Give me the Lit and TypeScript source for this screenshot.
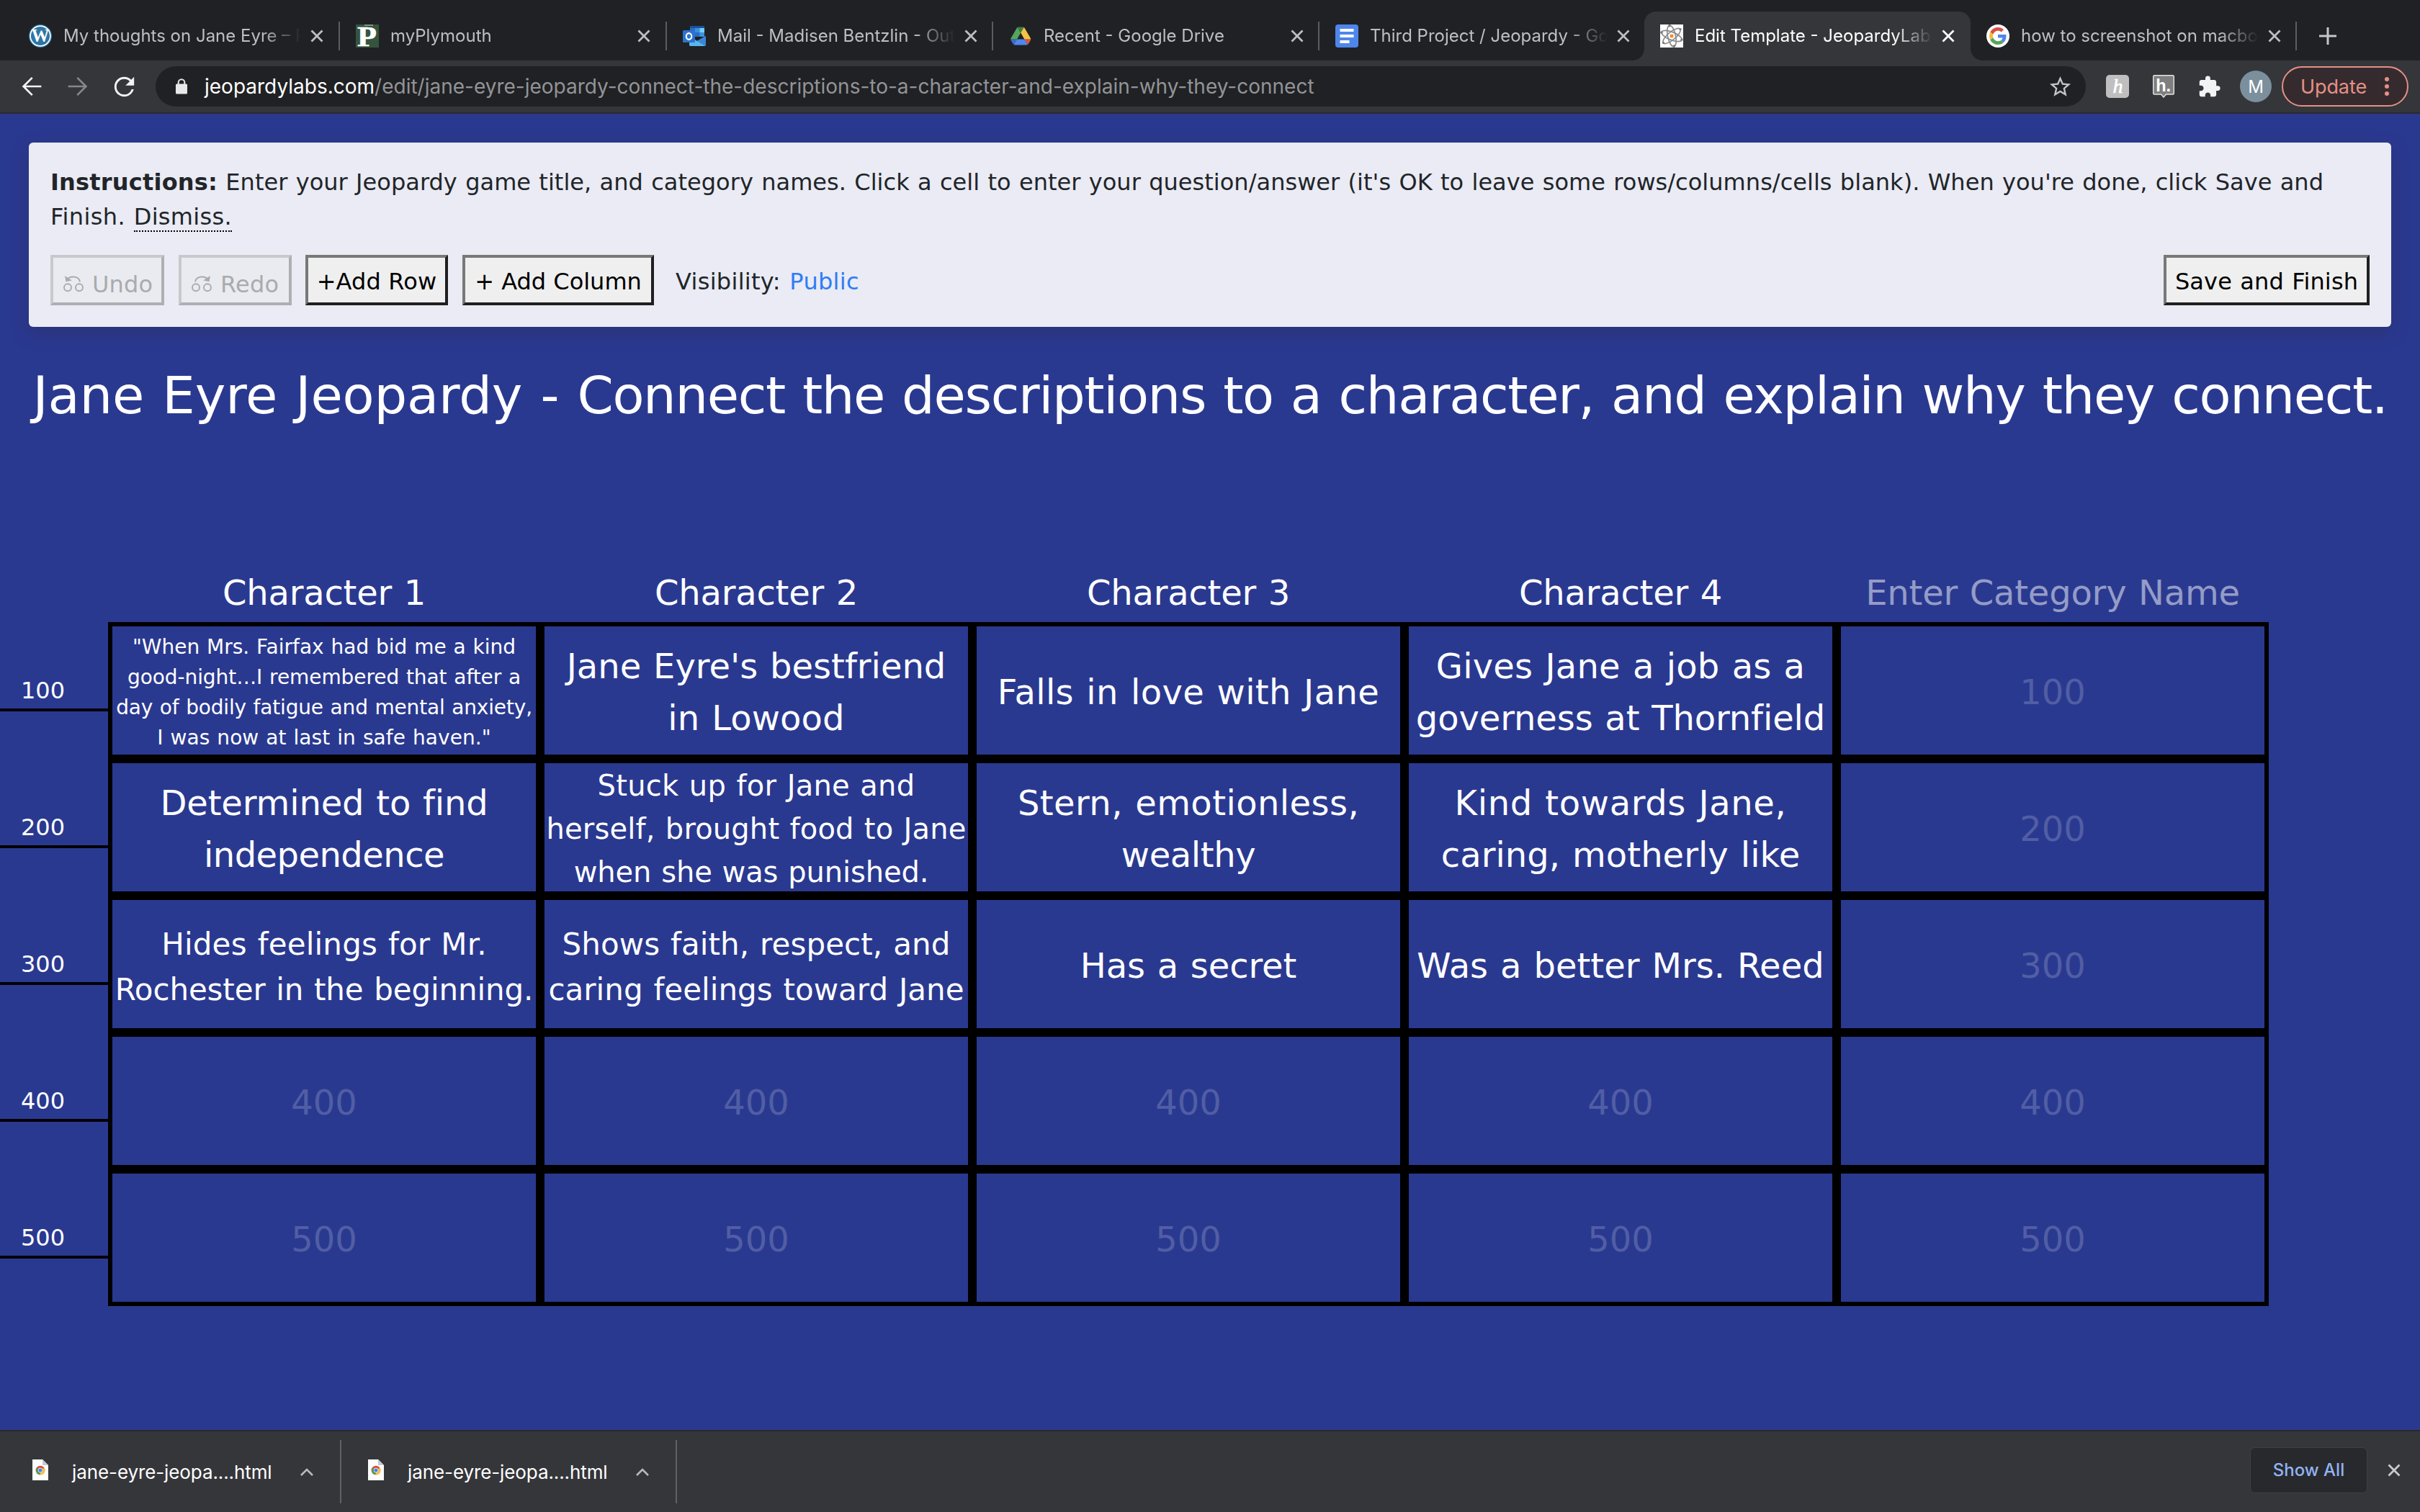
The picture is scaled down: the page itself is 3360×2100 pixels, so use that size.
import { LitElement, html, css, nothing } from "lit";
import { customElement } from "lit/decorators.js";
import { styleMap } from "lit/directives/style-map.js";
import { classMap } from "lit/directives/class-map.js";

/* ---------- icons ---------- */

const wordpress = html`<svg class="fav" viewBox="0 0 32 32"><circle cx="16" cy="16" r="16" fill="#2f75a3"/><circle cx="16" cy="16" r="13.900" fill="none" stroke="#fff" stroke-width="1.700"/><text x="16" y="24.400" text-anchor="middle" font-family="Liberation Serif, serif" font-weight="bold" font-size="25" textLength="25" lengthAdjust="spacingAndGlyphs" fill="#fff">W</text></svg>`;

const plymouth = html`<svg class="fav" viewBox="0 0 32 32"><rect width="32" height="32" fill="#35543f"/><rect x="12" width="12" height="2" fill="#7d9285"/><text x="15.500" y="29.500" text-anchor="middle" font-family="Liberation Serif, serif" font-weight="bold" font-size="41" textLength="27" lengthAdjust="spacingAndGlyphs" stroke="#fff" stroke-width=".6" fill="#fff">P</text></svg>`;

const outlook = html`<svg class="fav" viewBox="0 0 32 32"><path d="M10 2h20v15H10z" fill="#2b6cc4"/><path d="M10 2h20v3H10z" fill="#1d4f9a"/><path d="M17 5h6.500v6H17z" fill="#3c8fe0"/><path d="M23.500 5H30v6h-6.500z" fill="#6fd0fa"/><path d="M10 11h7v6h-7z" fill="#1b4a8f"/><path d="M23.500 11H30v6h-6.500z" fill="#3e93de"/><path d="M9 16l11 7 12-7v12a2 2 0 0 1-2 2H11a2 2 0 0 1-2-2z" fill="#4a9fe6"/><path d="M9 16l21 14H11a2 2 0 0 1-2-2z" fill="#58b5ef"/><path d="M32 16v12a2 2 0 0 1-.8 1.600L20 22.800z" fill="#3b86d4"/><rect y="8" width="17" height="17" rx="1.500" fill="#2b73cf"/><ellipse cx="8.500" cy="16.500" rx="3.700" ry="4.300" fill="none" stroke="#fff" stroke-width="2.200"/></svg>`;

const drive = html`<svg class="fav" viewBox="-7 -9 100 96"><path d="m6.600 66.850 3.850 6.650c.8 1.400 1.950 2.500 3.300 3.300l13.750-23.800h-27.500c0 1.550.4 3.100 1.200 4.500z" fill="#3a6bd0"/><path d="m43.650 25-13.750-23.800c-1.350.8-2.500 1.900-3.300 3.300l-25.400 44a9.060 9.060 0 0 0 -1.200 4.500h27.500z" fill="#57a55a"/><path d="m73.550 76.800c1.350-.8 2.500-1.900 3.300-3.300l1.600-2.750 7.650-13.250c.8-1.400 1.200-2.950 1.200-4.500h-27.502l5.852 11.500z" fill="#d9513f"/><path d="m43.650 25 13.750-23.800c-1.350-.8-2.900-1.200-4.500-1.200h-18.500c-1.600 0-3.150.45-4.500 1.200z" fill="#3c7f45"/><path d="m59.800 53h-32.300l-13.750 23.800c1.350.8 2.900 1.200 4.500 1.200h50.800c1.600 0 3.150-.45 4.500-1.200z" fill="#4f87ee"/><path d="m73.400 26.500-12.700-22c-.8-1.400-1.950-2.500-3.300-3.300l-13.750 23.800 16.150 28h27.450c0-1.550-.4-3.100-1.200-4.500z" fill="#f5c245"/></svg>`;

const docs = html`<svg class="fav" viewBox="0 0 32 32"><rect width="32" height="32" rx="4" fill="#4f86ec"/><path d="M6.500 6h19v4h-19zM6.500 14h19v4h-19zM6.500 22h13v4h-13z" fill="#fff"/></svg>`;

const atom = html`<svg class="fav" viewBox="0 0 32 32"><rect width="32" height="32" fill="#fff"/><g fill="none" stroke="#8c8c8c" stroke-width="1.700"><ellipse cx="16" cy="16" rx="5.500" ry="15" transform="rotate(-12 16 16)"/><ellipse cx="16" cy="16" rx="5.500" ry="15" transform="rotate(50 16 16)"/><ellipse cx="16" cy="16" rx="5.500" ry="15" transform="rotate(112 16 16)"/></g><g fill="#777"><circle cx="13" cy="1.800" r="1.800"/><circle cx="28" cy="6.500" r="1.600"/><circle cx="2" cy="11" r="1.800"/><circle cx="30" cy="21" r="1.700"/><circle cx="4.500" cy="25.500" r="1.600"/><circle cx="19.500" cy="30" r="1.700"/></g><circle cx="16" cy="16" r="4" fill="#fff"/><rect x="13.700" y="13.700" width="4.600" height="4.600" rx="1" fill="#ee8a35"/></svg>`;

const google = html`<svg class="fav" viewBox="0 0 32 32"><circle cx="16" cy="16" r="16" fill="#fff"/><g transform="translate(4 4)"><svg width="24" height="24" viewBox="0 0 48 48"><path fill="#d85140" d="M24 9.500c3.540 0 6.710 1.220 9.210 3.600l6.850-6.850C35.900 2.380 30.470 0 24 0 14.620 0 6.510 5.380 2.560 13.220l7.980 6.190C12.430 13.720 17.740 9.500 24 9.500z"/><path fill="#5086ec" d="M46.980 24.550c0-1.570-.15-3.090-.38-4.550H24v9.020h12.940c-.58 2.960-2.260 5.480-4.780 7.180l7.730 6c4.510-4.180 7.090-10.360 7.090-17.650z"/><path fill="#f3be42" d="M10.530 28.590c-.48-1.450-.76-2.990-.76-4.590s.27-3.140.76-4.590l-7.980-6.190C.92 16.460 0 20.120 0 24c0 3.880.92 7.540 2.560 10.780l7.970-6.190z"/><path fill="#58a55c" d="M24 48c6.480 0 11.930-2.130 15.890-5.810l-7.730-6c-2.150 1.450-4.920 2.300-8.160 2.300-6.260 0-11.570-4.220-13.470-9.910l-7.980 6.190C6.510 42.620 14.620 48 24 48z"/></svg></g></svg>`;

const cross = html`<svg class="cross" viewBox="0 0 20 20"><path d="M2.500 2.500l15 15M17.500 2.500l-15 15" fill="none" stroke="currentColor" stroke-width="2.800"/></svg>`;

const material = (size: number, d: string) =>
  html`<svg width=${size} height=${size} viewBox="0 0 24 24" fill="currentColor"><path d=${d}/></svg>`;

const BACK = "M20 11.200H7.100l5.900-5.900L11.900 4.200 4 12l7.900 7.800 1.100-1.100-5.900-5.900H20z";
const FORWARD = "M4 11.200h12.900L11 5.300l1.100-1.100L20 12l-7.900 7.800-1.100-1.100 5.900-5.900H4z";
const RELOAD = "M17.650 6.350A7.958 7.958 0 0 0 12 4c-4.420 0-7.990 3.580-7.990 8s3.570 8 7.990 8c3.730 0 6.840-2.550 7.730-6h-1.780A6.300 6.300 0 0 1 12 18.300c-3.450 0-6.300-2.850-6.300-6.300s2.850-6.300 6.300-6.300c1.700 0 3.300.7 4.450 1.850L13 11h7V4z";
const STAR = "M22 9.240l-7.190-.62L12 2 9.190 8.630 2 9.240l5.460 4.730L5.820 21 12 17.270 18.180 21l-1.630-7.030L22 9.240zM12 15.400l-3.760 2.270 1-4.280-3.320-2.880 4.380-.38L12 6.100l1.710 4.040 4.380.38-3.320 2.880 1 4.280L12 15.400z";
const PUZZLE = "M20.500 11H19V7c0-1.100-.9-2-2-2h-4V3.500a2.500 2.500 0 0 0-5 0V5H4c-1.100 0-1.990.9-1.990 2v3.800H3.500c1.490 0 2.700 1.210 2.700 2.700s-1.210 2.700-2.700 2.700H2V20c0 1.100.9 2 2 2h3.800v-1.500c0-1.490 1.210-2.700 2.700-2.700 1.490 0 2.700 1.210 2.700 2.700V22H17c1.100 0 2-.9 2-2v-4h1.500a2.500 2.500 0 0 0 0-5z";

const lock = html`<svg class="lock" viewBox="0 0 16 22"><path d="M3.700 8.500V5.600a4.300 4.300 0 0 1 8.600 0v2.900" fill="none" stroke="#e8e8ea" stroke-width="2"/><rect y="7.500" width="16" height="14" rx="1.600" fill="#e8e8ea"/></svg>`;

const honey = html`<svg class="honey" viewBox="0 0 32 32"><rect width="32" height="32" rx="5" fill="#bfbfbf"/><text x="16.500" y="25" text-anchor="middle" font-family="Liberation Serif, serif" font-style="italic" font-size="28" stroke="#fff" stroke-width=".7" fill="#fff">h</text></svg>`;

const hypothesis = html`<svg class="hypo" viewBox="0 0 30 32"><path d="M2 .8h26a1.300 1.300 0 0 1 1.300 1.300v23.600a1.300 1.300 0 0 1-1.300 1.300h-9.500L15 31l-3.500-4H2a1.300 1.300 0 0 1-1.300-1.300V2.100A1.300 1.300 0 0 1 2 .8z" fill="#7f7f7f" stroke="#e6e6e6" stroke-width="1.400"/><text x="4.200" y="23" font-family="Liberation Sans, sans-serif" font-weight="bold" font-size="23.500" fill="#fff">h.</text></svg>`;

const turnArrow = (flip: boolean) => html`<svg class=${classMap({ turn: true, flip })} viewBox="0 0 28 24"><g fill="none" stroke="currentColor" stroke-width="1.900"><circle cx="6" cy="17.300" r="5"/><circle cx="22" cy="17.300" r="5"/><path d="M4.500 7.500C8 .8 21.500.3 23 9.500"/></g><path d="M2 1l1.500 8.300 8.300-1.700z" fill="currentColor"/></svg>`;

const chromeFile = html`<svg class="file" viewBox="0 0 22 29"><path d="M0 0h14l8 8v21H0z" fill="#fdfdfd"/><path d="M14 0v8h8z" fill="#c9cbce"/><circle cx="11" cy="15" r="6.300" fill="#d8503f"/><path d="M11 15L5.500 11.900A6.300 6.300 0 0 0 10.500 21.300z" fill="#4d9d54"/><path d="M11 15l5.500-3.200A6.300 6.300 0 0 1 10.500 21.300z" fill="#f1bf42"/><circle cx="11" cy="15" r="3.200" fill="#fff"/><circle cx="11" cy="15" r="2.600" fill="#4a80e8"/></svg>`;

/* ---------- data ---------- */

interface Tab { icon: unknown; title: string; active?: boolean; sep?: boolean }
const TABS: Tab[] = [
  { icon: wordpress, title: "My thoughts on Jane Eyre – P", sep: true },
  { icon: plymouth, title: "myPlymouth", sep: true },
  { icon: outlook, title: "Mail - Madisen Bentzlin - Out", sep: true },
  { icon: drive, title: "Recent - Google Drive", sep: true },
  { icon: docs, title: "Third Project / Jeopardy - Go" },
  { icon: atom, title: "Edit Template - JeopardyLab", active: true },
  { icon: google, title: "how to screenshot on macbo", sep: true },
];

/* Each line carries its own tracking, in pixels. */
type Line = [text: string, tracking: number];
interface Clue { size: number; lines: Line[] }
const clue = (size: number, ...lines: Line[]): Clue => ({ size, lines });

const ROWS: { value: number; clues: (Clue | null)[] }[] = [
  {
    value: 100,
    clues: [
      clue(28, ['"When Mrs. Fairfax had bid me a kind', 0], ["good-night…I remembered that after a", -0.07], ["day of bodily fatigue and mental anxiety,", -0.17], ['I was now at last in safe haven."', 0.08]),
      clue(48, ["Jane Eyre's bestfriend", 0], ["in Lowood", 0.1]),
      clue(48, ["Falls in love with Jane", 0.38]),
      clue(48, ["Gives Jane a job as a", 0.22], ["governess at Thornfield", -0.1]),
      null,
    ],
  },
  {
    value: 200,
    clues: [
      clue(48, ["Determined to find", -0.12], ["independence", -0.55]),
      clue(40, ["Stuck up for Jane and", 0.27], ["herself, brought food to Jane", 0.17], ["when she was punished.\u00a0", -0.12]),
      clue(48, ["Stern, emotionless,", 0.43], ["wealthy", -0.4]),
      clue(48, ["Kind towards Jane,", 0.63], ["caring, motherly like", 0.05]),
      null,
    ],
  },
  {
    value: 300,
    clues: [
      clue(42, ["Hides feelings for Mr.", 0.18], ["Rochester in the beginning.", -0.12]),
      clue(42, ["Shows faith, respect, and", 0.09], ["caring feelings toward Jane", 0.03]),
      clue(48, ["Has a secret", -0.1]),
      clue(48, ["Was a better Mrs. Reed", 0.03]),
      null,
    ],
  },
  { value: 400, clues: [null, null, null, null, null] },
  { value: 500, clues: [null, null, null, null, null] },
];

const CATEGORIES = ["Character 1", "Character 2", "Character 3", "Character 4", ""];

/* ---------- browser chrome ---------- */

@customElement("browser-tabs")
class BrowserTabs extends LitElement {
  static styles = css`
    :host { display: flex; height: 84px; box-sizing: border-box; padding: 16px 0 0 18px; background: #202124; font: 24px Inter, sans-serif; color: #bcbfc3; }
    .tab { position: relative; display: flex; align-items: center; flex: none; width: 453px; height: 68px; box-sizing: border-box; padding-left: 22px; }
    .tab:nth-child(-n + 2) { width: 454px; }
    .tab:nth-child(5) { width: 451px; }
    .fav { width: 32px; height: 32px; flex: none; }
    .title { width: 332px; margin-left: 16px; white-space: nowrap; line-height: 36px; -webkit-mask-image: linear-gradient(90deg, #000 276px, transparent 330px); mask-image: linear-gradient(90deg, #000 276px, transparent 330px); }
    .cross { width: 20px; height: 20px; margin-left: 10px; flex: none; }
    .sep { width: 2px; height: 40px; margin-left: auto; background: #5a5c60; }
    .active { background: #35363a; border-radius: 16px 16px 0 0; color: #fff; }
    .active::before, .active::after { content: ""; position: absolute; bottom: 0; width: 16px; height: 16px; }
    .active::before { left: -16px; background: radial-gradient(circle at 0 0, transparent 15.500px, #35363a 16px); }
    .active::after { right: -16px; background: radial-gradient(circle at 100% 0, transparent 15.500px, #35363a 16px); }
    .plus { width: 24px; height: 24px; margin: 22px 0 0 31px; }
  `;
  render() {
    return html`${TABS.map((t) => html`<div class=${classMap({ tab: true, active: !!t.active })}>${t.icon}<div class="title">${t.title}</div>${cross}${t.sep ? html`<div class="sep"></div>` : nothing}</div>`)}
      <svg class="plus" viewBox="0 0 24 24"><path d="M12 0v24M0 12h24" stroke="#c4c6ca" stroke-width="3"/></svg>`;
  }
}

@customElement("browser-toolbar")
class BrowserToolbar extends LitElement {
  static styles = css`
    :host { display: flex; align-items: center; height: 74px; box-sizing: border-box; border-bottom: 2px solid #29292b; padding-left: 24px; background: #35363a; color: #f1f3f4; font: 28px Inter, sans-serif; }
    svg { display: block; flex: none; }
    .nav { display: flex; align-items: center; gap: 24px; width: 192px; }
    .off { color: #85878a; display: flex; }
    .omni { display: flex; align-items: center; width: 2680px; height: 56px; box-sizing: border-box; border-radius: 28px; background: #202124; padding: 0 18px 0 28px; white-space: nowrap; }
    .lock { width: 16px; height: 22px; margin-right: 24px; }
    .host { color: #fff; }
    .path { color: #929497; flex: 1; }
    .star { color: #c3c5c8; }
    .honey { width: 32px; height: 32px; margin-left: 28px; }
    .hypo { width: 30px; height: 32px; margin-left: 33px; }
    .puzzle { margin-left: 32px; }
    .avatar { display: flex; align-items: center; justify-content: center; width: 44px; height: 44px; margin-left: 26px; border-radius: 50%; background: #7b8f9c; color: #fff; font-size: 24px; }
    .update { display: flex; align-items: center; width: 176px; height: 56px; box-sizing: border-box; margin-left: 14px; padding: 0 25px 0 24px; justify-content: space-between; border: 2px solid #e59086; border-radius: 28px; background: #352b2e; color: #e59086; font-size: 27px; letter-spacing: -.1px; }
  `;
  render() {
    return html`
      <div class="nav">${material(40, BACK)}<div class="off">${material(40, FORWARD)}</div>${material(41, RELOAD)}</div>
      <div class="omni">${lock}<span class="host">jeopardylabs.com</span><span class="path">/edit/jane-eyre-jeopardy-connect-the-descriptions-to-a-character-and-explain-why-they-connect</span><div class="star">${material(35, STAR)}</div></div>
      ${honey}${hypothesis}<div class="puzzle">${material(33, PUZZLE)}</div>
      <div class="avatar">M</div>
      <div class="update"><span>Update</span><svg width="6" height="26" viewBox="0 0 6 26" fill="currentColor"><circle cx="3" cy="3" r="3"/><circle cx="3" cy="13" r="3"/><circle cx="3" cy="23" r="3"/></svg></div>`;
  }
}

@customElement("download-shelf")
class DownloadShelf extends LitElement {
  static styles = css`
    :host { display: flex; align-items: center; height: 114px; box-sizing: border-box; border-top: 2px solid #29292b; padding-left: 8px; background: #35363a; color: #fff; font: 26px Inter, sans-serif; }
    .item { display: flex; align-items: center; width: 466px; height: 88px; box-sizing: border-box; padding-left: 37px; }
    .file { width: 22px; height: 29px; margin: 0 33px 5px 0; flex: none; }
    .name { width: 317px; letter-spacing: -.1px; }
    .chev { width: 18px; height: 11px; flex: none; }
    .sep { width: 2px; height: 88px; margin-left: auto; background: #5f6165; }
    .all { display: flex; align-items: center; justify-content: center; width: 163px; height: 64px; box-sizing: border-box; margin: 0 27px 5px auto; border: 1px solid #3f4044; border-radius: 7px; background: #28292c; color: #92b3f3; font-size: 24px; font-weight: 500; }
    .cross { width: 20px; height: 20px; margin: 0 26px 4px 0; color: #c9cbcd; }
  `;
  render() {
    const item = html`<div class="item">${chromeFile}<span class="name">jane-eyre-jeopa....html</span><svg class="chev" viewBox="0 0 18 11"><path d="M1 10l8-8 8 8" fill="none" stroke="#b9bbbe" stroke-width="2.600"/></svg><div class="sep"></div></div>`;
    return html`${item}${item}<div class="all">Show All</div>${cross}`;
  }
}

/* ---------- page ---------- */

@customElement("edit-panel")
class EditPanel extends LitElement {
  static styles = css`
    :host { display: block; height: 256px; box-sizing: border-box; padding: 31px 30px 0; border-radius: 6px; background: #eaebf4; color: #212529; box-shadow: 0 8px 26px rgba(45, 35, 60, .3); font: 32px/48px "DejaVu Sans", Verdana, sans-serif; white-space: nowrap; }
    .line { height: 48px; word-spacing: 1.088px; letter-spacing: .035px; }
    .lead { letter-spacing: .2px; }
    .loose { letter-spacing: .4px; }
    .dismiss { display: inline-block; height: 43px; border-bottom: 2px dotted #000; line-height: 48px; letter-spacing: .3px; }
    .bar { display: flex; align-items: center; margin-top: 29px; height: 70px; }
    .btn { display: flex; align-items: center; justify-content: center; flex: none; height: 70px; box-sizing: border-box; padding: 4px 0 0; border: 4px solid; border-color: #767976 #1f1f21 #1f1f21 #767976; background: #efefef; color: #000; }
    .disabled { justify-content: flex-start; padding: 12px 0 0 14px; border-color: #c8c9cc #aeafb3 #aeafb3 #c8c9cc; background: #eaebf0; color: #a9abae; letter-spacing: .2px; }
    .turn { width: 28px; height: 24px; margin: 0 12px 3px 0; }
    .flip { transform: scaleX(-1); }
    .undo { width: 158px; }
    .redo { width: 157px; margin-left: 20px; }
    .row { width: 198px; margin-left: 19px; letter-spacing: .15px; }
    .col { width: 266px; margin-left: 20px; }
    .vis { margin-left: 30px; padding-top: 4px; letter-spacing: .3px; }
    .vis a { color: #2f7df6; margin-left: 2px; }
    .save { width: 286px; margin-left: auto; letter-spacing: .12px; word-spacing: 1.088px; }
  `;
  render() {
    return html`
      <div class="line"><b class="lead">Instructions:</b> Enter your Jeopardy game title, and category names. Click a cell to enter your question/answer (it's OK to leave some rows/columns/cells blank). When you're done, click Save and</div>
      <div class="line loose">Finish. <span class="dismiss">Dismiss.</span></div>
      <div class="bar">
        <div class="btn disabled undo">${turnArrow(false)}Undo</div>
        <div class="btn disabled redo">${turnArrow(true)}Redo</div>
        <div class="btn row">+Add Row</div>
        <div class="btn col">+ Add Column</div>
        <div class="vis">Visibility: <a>Public</a></div>
        <div class="btn save">Save and Finish</div>
      </div>`;
  }
}

@customElement("game-board")
class GameBoard extends LitElement {
  static styles = css`
    :host { display: block; color: #fff; font: 48px/1.5 "DejaVu Sans", Verdana, sans-serif; word-spacing: .034em; white-space: nowrap; text-align: center; }
    .heads { display: flex; padding-left: 150px; height: 77px; letter-spacing: -.2px; }
    .head { width: 600px; }
    .empty { color: rgba(255, 255, 255, .5); }
    .row { display: flex; height: 190px; }
    .label { display: flex; align-items: flex-end; width: 150px; height: 124px; box-sizing: border-box; padding: 0 0 5px 29px; border-bottom: 4px solid #000; font-size: 32px; line-height: 40px; }
    .cell { display: flex; align-items: center; justify-content: center; width: 600px; box-sizing: border-box; border: 6px solid #000; }
    .text { padding-top: .1em; word-spacing: .034em; }
    .drop { padding-top: .19em; }
    .blank { color: rgba(255, 255, 255, .2); }
  `;
  render() {
    return html`
      <div class="heads">${CATEGORIES.map((c) => html`<div class=${classMap({ head: true, empty: !c })}>${c || "Enter Category Name"}</div>`)}</div>
      ${ROWS.map((r) => html`<div class="row"><div class="label">${r.value}</div>
        ${r.clues.map((c) => c
          ? html`<div class="cell"><div class=${classMap({ text: true, drop: c.size === 28 || c.size === 42 })} style=${styleMap({ fontSize: `${c.size}px` })}>${c.lines.map(([t, ls]) => html`<div style=${styleMap({ letterSpacing: `${ls}px` })}>${t}</div>`)}</div></div>`
          : html`<div class="cell"><div class="text blank">${r.value}</div></div>`)}
      </div>`)}`;
  }
}

@customElement("app-root")
class AppRoot extends LitElement {
  static styles = css`
    :host { display: flex; flex-direction: column; width: 3360px; height: 2100px; overflow: hidden; background: #2a3990; }
    main { flex: 1; min-height: 0; padding: 40px 0 0; }
    edit-panel { margin: 0 40px; }
    .title { margin: 53px 0 196px; color: #fff; font: 72px/84px "DejaVu Sans", Verdana, sans-serif; word-spacing: .034em; letter-spacing: -1.32px; text-align: center; white-space: nowrap; }
    .game { letter-spacing: -.15px; }
  `;
  render() {
    return html`
      <browser-tabs></browser-tabs>
      <browser-toolbar></browser-toolbar>
      <main>
        <edit-panel></edit-panel>
        <div class="title"><span class="game">Jane Eyre Jeopardy - </span>Connect the descriptions to a character, and explain why they connect.</div>
        <game-board></game-board>
      </main>
      <download-shelf></download-shelf>`;
  }
}
